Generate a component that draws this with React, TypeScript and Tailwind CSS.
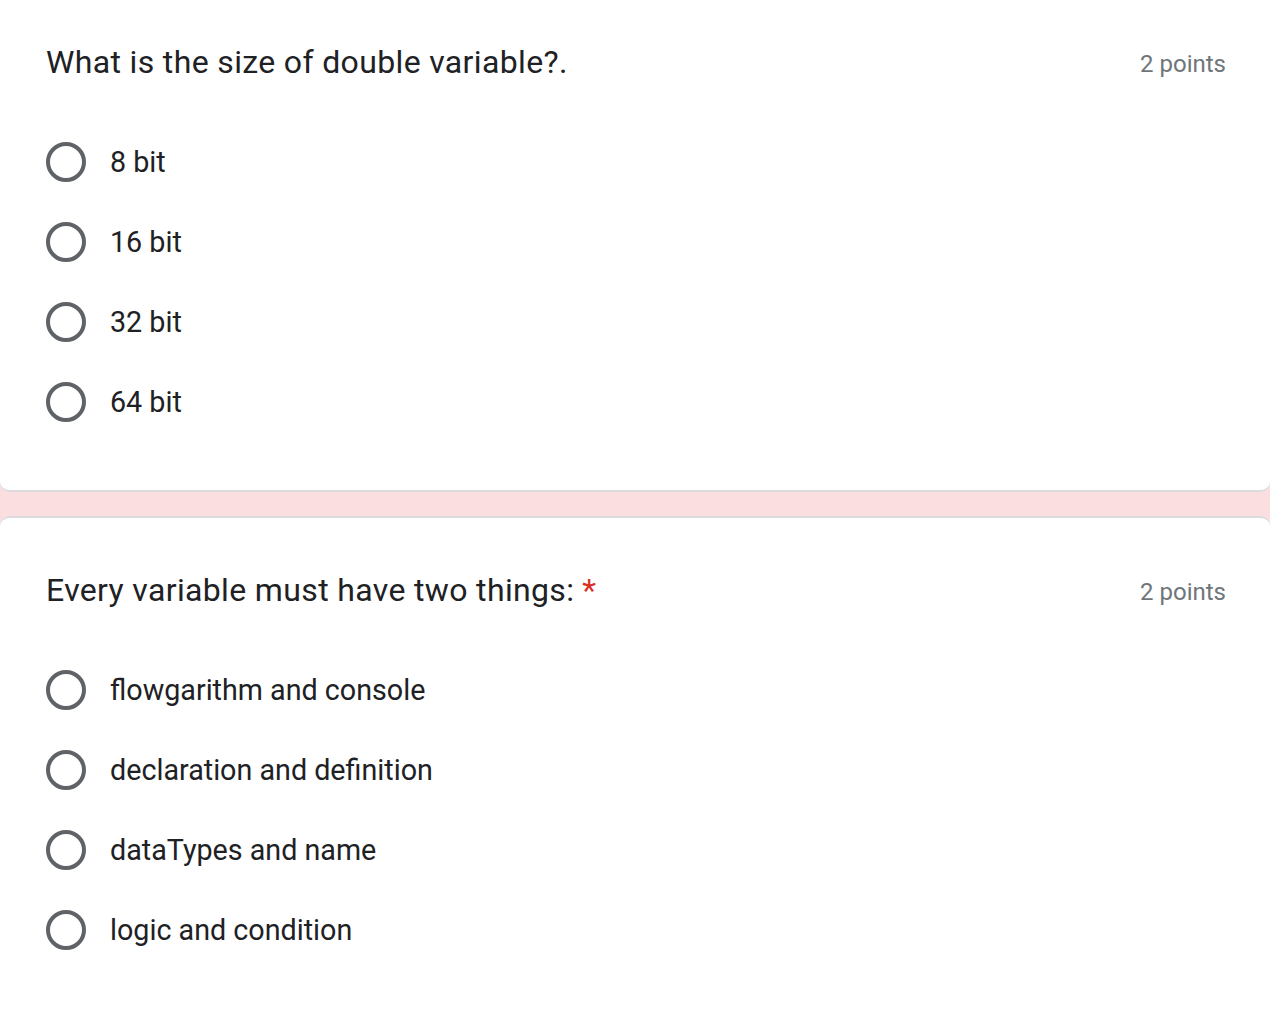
import React from "react";

type Question = {
  title: string;
  required?: boolean;
  points: string;
  options: string[];
};

const QUESTIONS: Question[] = [
  {
    title: "What is the size of double variable?.",
    points: "2 points",
    options: ["8 bit", "16 bit", "32 bit", "64 bit"],
  },
  {
    title: "Every variable must have two things:",
    required: true,
    points: "2 points",
    options: [
      "flowgarithm and console",
      "declaration and definition",
      "dataTypes and name",
      "logic and condition",
    ],
  },
];

function Radio() {
  return <span className="block size-[40px] shrink-0 rounded-full border-[4px] border-[#5f6368]" />;
}

function QuestionCard({ q, first }: { q: Question; first?: boolean }) {
  return (
    <div
      className={
        first
          ? "rounded-b-[10px] border-b-2 border-[#dadce0] bg-white pr-[44px] pl-[46px] pt-[42px] pb-[48px]"
          : "rounded-t-[10px] border-t-2 border-[#dadce0] bg-white pr-[44px] pl-[46px] pt-[52px] pb-[60px]"
      }
    >
      <div className="flex items-start justify-between">
        <h2 className="text-[32px] leading-[40px] font-normal tracking-[0.35px] text-[#202124]">
          {q.title}
          {q.required && <span className="ml-[8px] text-[#d93025]">*</span>}
        </h2>
        <span className="mt-[2px] text-[24px] leading-[40px] text-[#70757a]">{q.points}</span>
      </div>
      <div className="mt-[38px] flex flex-col">
        {q.options.map((opt) => (
          <label key={opt} className="flex h-[80px] items-center gap-[24px]">
            <Radio />
            <span className="text-[28.7px] leading-[40px] text-[#202124]">{opt}</span>
          </label>
        ))}
      </div>
    </div>
  );
}

export default function App() {
  return (
    <div
      className="h-[1010px] w-[1270px] overflow-hidden bg-[#fbdfe0]"
      style={{ fontFamily: "Roboto, 'Liberation Sans', sans-serif" }}
    >
      <QuestionCard q={QUESTIONS[0]} first />
      <div className="h-[24px]" />
      <QuestionCard q={QUESTIONS[1]} />
    </div>
  );
}
